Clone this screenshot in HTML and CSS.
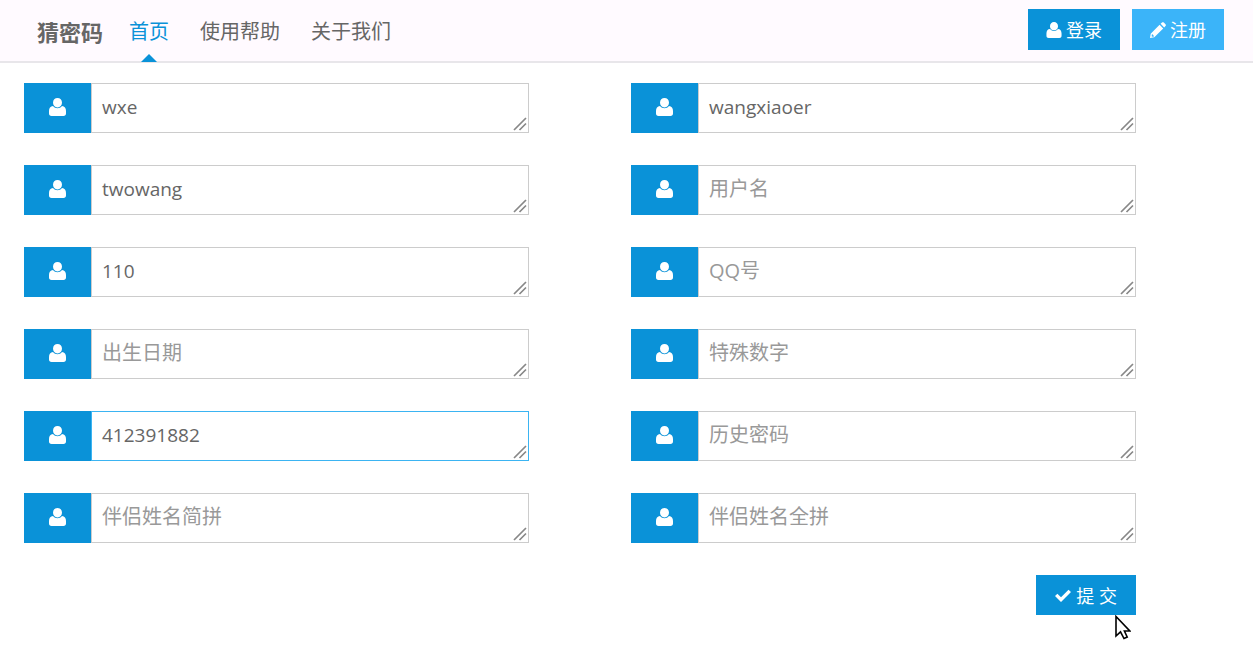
FILE: index.html
```html
<!DOCTYPE html>
<html lang="zh-CN">
<head>
<meta charset="utf-8">
<meta name="viewport" content="width=device-width, initial-scale=1">
<title>猜密码</title>
<link rel="stylesheet" href="styles.css">
</head>
<body>
<svg class="sprite" aria-hidden="true">
  <symbol id="user" viewBox="0 0 17 18">
    <path d="M8.500 0c2.700 0 4.500 2 4.500 4.700S11.200 9.400 8.500 9.400 4 7.400 4 4.700 5.800 0 8.500 0z"/>
    <path d="M4 8c1.200 1.500 2.700 2.200 4.500 2.200S11.800 9.500 13 8c2.600.1 4 2 4 5v2.500c0 1.600-.9 2.500-2.500 2.500h-12C.9 18 0 17.100 0 15.500V13c0-3 1.400-4.900 4-5z"/>
  </symbol>
  <symbol id="pencil" viewBox="0 0 16 16">
    <path fill-rule="evenodd" d="M9.600 2.800l3.600 3.600L4.300 15.300 0 16l.7-4.300zM1.900 12.300l-.3 2 .6.500 1.800-.3v-1h-1v-1zM10.600 1.800L12 .5c.5-.5 1.300-.5 1.800 0l1.700 1.700c.5.5.5 1.300 0 1.800l-1.300 1.400z"/>
  </symbol>
  <symbol id="check" viewBox="0 0 16 13">
    <path d="M0 6.600L2.400 4.200 6 7.700 13.500.2 16 2.600 6 12.600z"/>
  </symbol>
  <symbol id="grip" viewBox="0 0 14 14">
    <path d="M1 13L13 1M6.500 13L13 6.500" fill="none" stroke="currentColor" stroke-width="1.700"/>
  </symbol>
</svg>

<header class="topbar">
  <a class="brand" href="#">猜密码</a>
  <nav class="nav">
    <a class="nav-link nav-link-active" href="#">首页</a>
    <a class="nav-link" href="#">使用帮助</a>
    <a class="nav-link" href="#">关于我们</a>
  </nav>
  <div class="actions">
    <button class="button" type="button"><svg class="icon"><use href="#user"/></svg>登录</button>
    <button class="button button-light" type="button"><svg class="icon"><use href="#pencil"/></svg>注册</button>
  </div>
</header>

<main>
  <form class="form">
    <div class="fields">
      <div class="field"><label class="addon" for="f1"><svg class="addon-icon"><use href="#user"/></svg></label><textarea class="input" id="f1" rows="1" aria-label="姓名简拼">wxe</textarea><svg class="grip"><use href="#grip"/></svg></div>
      <div class="field"><label class="addon" for="f2"><svg class="addon-icon"><use href="#user"/></svg></label><textarea class="input" id="f2" rows="1" aria-label="姓名全拼">wangxiaoer</textarea><svg class="grip"><use href="#grip"/></svg></div>
      <div class="field"><label class="addon" for="f3"><svg class="addon-icon"><use href="#user"/></svg></label><textarea class="input" id="f3" rows="1" aria-label="英文名">twowang</textarea><svg class="grip"><use href="#grip"/></svg></div>
      <div class="field"><label class="addon" for="f4"><svg class="addon-icon"><use href="#user"/></svg></label><textarea class="input" id="f4" rows="1" aria-label="用户名" placeholder="用户名"></textarea><svg class="grip"><use href="#grip"/></svg></div>
      <div class="field"><label class="addon" for="f5"><svg class="addon-icon"><use href="#user"/></svg></label><textarea class="input" id="f5" rows="1" aria-label="手机号">110</textarea><svg class="grip"><use href="#grip"/></svg></div>
      <div class="field"><label class="addon" for="f6"><svg class="addon-icon"><use href="#user"/></svg></label><textarea class="input" id="f6" rows="1" aria-label="QQ号" placeholder="QQ号"></textarea><svg class="grip"><use href="#grip"/></svg></div>
      <div class="field"><label class="addon" for="f7"><svg class="addon-icon"><use href="#user"/></svg></label><textarea class="input" id="f7" rows="1" aria-label="出生日期" placeholder="出生日期"></textarea><svg class="grip"><use href="#grip"/></svg></div>
      <div class="field"><label class="addon" for="f8"><svg class="addon-icon"><use href="#user"/></svg></label><textarea class="input" id="f8" rows="1" aria-label="特殊数字" placeholder="特殊数字"></textarea><svg class="grip"><use href="#grip"/></svg></div>
      <div class="field"><label class="addon" for="f9"><svg class="addon-icon"><use href="#user"/></svg></label><textarea class="input input-active" id="f9" rows="1" aria-label="号码">412391882</textarea><svg class="grip"><use href="#grip"/></svg></div>
      <div class="field"><label class="addon" for="f10"><svg class="addon-icon"><use href="#user"/></svg></label><textarea class="input" id="f10" rows="1" aria-label="历史密码" placeholder="历史密码"></textarea><svg class="grip"><use href="#grip"/></svg></div>
      <div class="field"><label class="addon" for="f11"><svg class="addon-icon"><use href="#user"/></svg></label><textarea class="input" id="f11" rows="1" aria-label="伴侣姓名简拼" placeholder="伴侣姓名简拼"></textarea><svg class="grip"><use href="#grip"/></svg></div>
      <div class="field"><label class="addon" for="f12"><svg class="addon-icon"><use href="#user"/></svg></label><textarea class="input" id="f12" rows="1" aria-label="伴侣姓名全拼" placeholder="伴侣姓名全拼"></textarea><svg class="grip"><use href="#grip"/></svg></div>
    </div>
    <div class="submit-row">
      <button class="button button-submit" type="button"><svg class="icon"><use href="#check"/></svg>提 交</button>
      <span class="arrow"><svg width="16" height="25" viewBox="0 0 16 25"><path d="M1 1.500V21l4.500-4.200L9 23.500l3.200-1.500-2.800-6h5.400z" fill="#fff" stroke="#000" stroke-width="1.600"/></svg></span>
    </div>
  </form>
</main>
</body>
</html>
```
FILE: styles.css
```css
* {
  box-sizing: border-box;
}

body {
  min-height: 100vh;
  margin: 0;
  background: #fff;
  color: #666;
  font-family: "Open Sans", "Noto Sans CJK SC", sans-serif;
  font-size: 20px;
}

.sprite {
  position: absolute;
  width: 0;
  height: 0;
}

.topbar {
  display: flex;
  align-items: stretch;
  height: 63px;
  padding: 0 29px 0 37px;
  background: #fffaff;
  border-bottom: 2px solid #e8e6ea;
}

.brand {
  margin-right: 26px;
  color: #666;
  font-size: 22px;
  font-weight: 700;
  line-height: 64px;
  text-decoration: none;
}

.nav {
  display: flex;
  gap: 31px;
}

.nav-link {
  position: relative;
  color: #666;
  line-height: 64px;
  text-decoration: none;
}

.nav-link-active {
  color: #0a92d8;
}

.nav-link-active::after {
  content: "";
  position: absolute;
  bottom: -1px;
  left: 50%;
  margin-left: -8px;
  border: 8px solid transparent;
  border-top: 0;
  border-bottom-color: #0a92d8;
}

.actions {
  display: flex;
  align-items: flex-start;
  gap: 12px;
  margin-left: auto;
  padding-top: 9px;
}

.button {
  display: flex;
  align-items: center;
  gap: 4px;
  height: 41px;
  padding: 0 18px 2px;
  border: 0;
  background: #0a92d8;
  color: #fff;
  font-family: inherit;
  font-size: 18px;
}

.button-light {
  background: #3bb4f9;
}

.button-submit {
  gap: 5px;
  height: 40px;
  padding: 0 19px;
}

.icon {
  width: 16px;
  height: 16px;
  margin-top: 2px;
  fill: currentColor;
}

.form {
  padding: 20px 117px 34px 24px;
}

.fields {
  display: grid;
  grid-template-columns: 1fr 1fr;
  gap: 32px 102px;
}

.field {
  position: relative;
  display: flex;
  height: 50px;
}

.addon {
  display: flex;
  align-items: center;
  justify-content: center;
  width: 67px;
  padding-bottom: 3px;
  background: #0a92d8;
  color: #fff;
}

.addon-icon {
  width: 17px;
  height: 18px;
  fill: currentColor;
}

.input {
  flex: 1;
  min-width: 0;
  padding: 9px 10px;
  border: 1px solid #ccc;
  border-radius: 0;
  background: #fff;
  color: #666;
  font-family: inherit;
  font-size: 19px;
  line-height: 28px;
  resize: none;
  overflow: hidden;
}

.input::placeholder {
  color: #999;
  font-size: 20px;
}

.input-active {
  border-color: #3bb4f2;
}

.grip {
  position: absolute;
  right: 2px;
  bottom: 2px;
  width: 14px;
  height: 14px;
  color: #888;
  pointer-events: none;
}

.submit-row {
  position: relative;
  display: flex;
  justify-content: flex-end;
  margin-top: 32px;
}

.arrow {
  position: absolute;
  top: 100%;
  right: 5px;
  z-index: 1;
  line-height: 0;
}
```
